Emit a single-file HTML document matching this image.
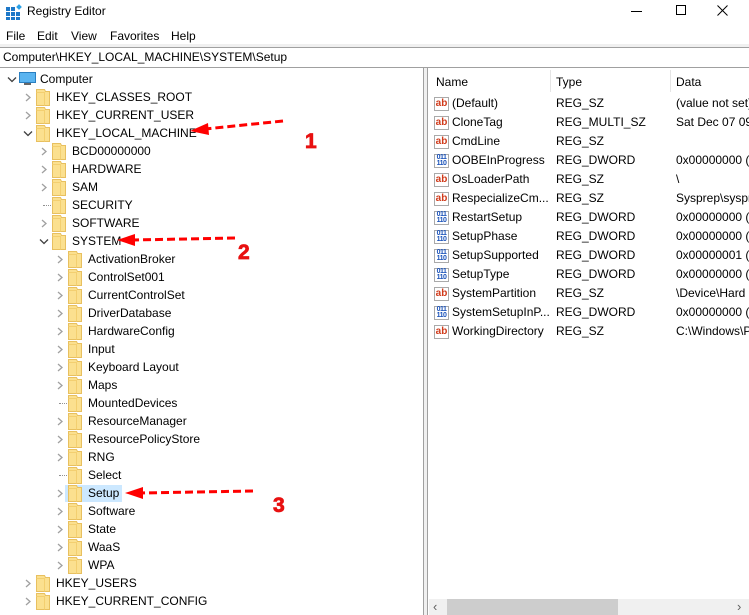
<!DOCTYPE html>
<html><head><meta charset="utf-8"><style>
*{margin:0;padding:0;box-sizing:border-box}
body{width:749px;height:615px;background:#fff;font-family:"Liberation Sans",sans-serif;font-size:12px;color:#000;position:relative;overflow:hidden}
.a{position:absolute;white-space:nowrap}
.t{position:absolute;height:18px;line-height:18px;white-space:nowrap}
.r{position:absolute;height:19px;line-height:19px;white-space:nowrap}
</style></head><body>
<svg class="a" style="left:6px;top:4px" width="16" height="16"><rect x="0" y="3" width="4" height="4" fill="#1e78c8"/><rect x="5" y="3" width="4" height="4" fill="#1e78c8"/><rect x="0" y="8" width="4" height="4" fill="#1e78c8"/><rect x="5" y="8" width="4" height="4" fill="#1e78c8"/><rect x="10" y="8" width="4" height="4" fill="#1e78c8"/><rect x="0" y="13" width="4" height="3" fill="#1e78c8"/><rect x="5" y="13" width="4" height="3" fill="#1e78c8"/><rect x="10" y="13" width="4" height="3" fill="#1e78c8"/><rect x="11" y="1" width="4" height="4" fill="#2aa0e6" transform="rotate(45 13 3)"/></svg>
<div class="a" style="left:27px;top:4px;font-size:12px">Registry Editor</div>
<div class="a" style="left:631px;top:11px;width:11px;height:1px;background:#000"></div>
<div class="a" style="left:676px;top:5px;width:10px;height:10px;border:1px solid #000"></div>
<svg class="a" style="left:717px;top:5px" width="11" height="11"><path d="M0.5 0.5l10 10M10.5 0.5l-10 10" stroke="#000" stroke-width="1"/></svg>
<div class="a" style="left:6px;top:29px">File</div>
<div class="a" style="left:37px;top:29px">Edit</div>
<div class="a" style="left:71px;top:29px">View</div>
<div class="a" style="left:110px;top:29px">Favorites</div>
<div class="a" style="left:171px;top:29px">Help</div>
<div class="a" style="left:0;top:44px;width:749px;height:3px;background:#f0f0f0"></div>
<div class="a" style="left:0;top:47px;width:749px;height:1px;background:#a0a0a0"></div>
<div class="a" style="left:3px;top:50px">Computer\HKEY_LOCAL_MACHINE\SYSTEM\Setup</div>
<div class="a" style="left:0;top:67px;width:749px;height:1px;background:#a0a0a0"></div>
<div class="a" style="left:423px;top:68px;width:5px;height:547px;background:#f0f0f0;border-left:1px solid #a0a0a0;border-right:1px solid #a0a0a0"></div>
<div id="tree"></div>
<div class="a" style="left:436px;top:75px">Name</div>
<div class="a" style="left:550px;top:70px;width:1px;height:22px;background:#e5e5e5"></div>
<div class="a" style="left:556px;top:75px">Type</div>
<div class="a" style="left:670px;top:70px;width:1px;height:22px;background:#e5e5e5"></div>
<div class="a" style="left:676px;top:75px">Data</div>
<div id="list"></div>
<div class="a" style="left:429px;top:599px;width:320px;height:16px;background:#f0f0f0"></div>
<div class="a" style="left:447px;top:599px;width:171px;height:16px;background:#cdcdcd"></div>
<div class="a" style="left:433px;top:599px;color:#606060;font-size:13px;line-height:16px">‹</div>
<div class="a" style="left:737px;top:599px;color:#606060;font-size:13px;line-height:16px">›</div>
<svg class="a" style="left:0;top:0" width="749" height="615">
<g stroke="#f00" stroke-width="3" stroke-dasharray="8 4" fill="none">
<line x1="283" y1="121" x2="205" y2="129"/>
<line x1="235" y1="238" x2="133" y2="240"/>
<line x1="253" y1="491" x2="140" y2="493"/>
</g>
<g fill="#f00">
<polygon points="190,131 208,123 209,135"/>
<polygon points="117,240 135,234 135,246"/>
<polygon points="125,493 143,487 143,499"/>
</g>
<g fill="#e81010" font-family="Liberation Sans" font-weight="700" font-size="21" stroke="#e81010" stroke-width="0.8">
<text x="305" y="148">1</text>
<text x="238" y="259">2</text>
<text x="273" y="512">3</text>
</g>
</svg>
<script>
var tree=[[0,'Computer','v'],[1,'HKEY_CLASSES_ROOT','>'],[1,'HKEY_CURRENT_USER','>'],[1,'HKEY_LOCAL_MACHINE','v'],[2,'BCD00000000','>'],[2,'HARDWARE','>'],[2,'SAM','>'],[2,'SECURITY','.'],[2,'SOFTWARE','>'],[2,'SYSTEM','v'],
[3,'ActivationBroker','>'],[3,'ControlSet001','>'],[3,'CurrentControlSet','>'],[3,'DriverDatabase','>'],[3,'HardwareConfig','>'],[3,'Input','>'],[3,'Keyboard Layout','>'],[3,'Maps','>'],[3,'MountedDevices','.'],[3,'ResourceManager','>'],[3,'ResourcePolicyStore','>'],[3,'RNG','>'],[3,'Select','.'],[3,'Setup','>'],[3,'Software','>'],[3,'State','>'],[3,'WaaS','>'],[3,'WPA','>'],[1,'HKEY_USERS','>'],[1,'HKEY_CURRENT_CONFIG','>']];
var h='';
tree.forEach(function(e,i){var l=e[0],y=70+i*18;
 var ex=12+16*l, fx=(l==0?19:36+16*(l-1));
 if(e[1]=='Setup')h+='<div class="a" style="left:65px;top:'+(y+1)+'px;width:57px;height:17px;background:#cce8ff"></div>';
 if(e[2]=='>')h+='<svg class="a" style="left:'+(ex-4)+'px;top:'+(y+5)+'px" width="8" height="9"><path d="M2 1l4 3.5L2 8" stroke="#a0a0a0" stroke-width="1.3" fill="none"/></svg>';
 if(e[2]=='v')h+='<svg class="a" style="left:'+(ex-5)+'px;top:'+(y+6)+'px" width="10" height="7"><path d="M1 1.5l4 4 4-4" stroke="#404040" stroke-width="1.3" fill="none"/></svg>';
 if(e[2]=='.')h+='<div class="a" style="left:'+(ex-1)+'px;top:'+(y+9)+'px;width:8px;border-top:1px dotted #909090"></div>';
 if(l==0)h+='<svg class="a" style="left:19px;top:'+(y+2)+'px" width="17" height="14"><rect x="0.5" y="0.5" width="16" height="10" fill="#5ab4f0" stroke="#2a7fc0"/><rect x="5" y="11" width="7" height="2" fill="#666"/></svg>';
 else h+='<svg class="a" style="left:'+fx+'px;top:'+(y+1)+'px" width="14" height="17"><path d="M0.5 0.5h8l1 2h4v14h-13z" fill="#fbe08f" stroke="#e8c060"/><path d="M0.5 3.5h8v13" fill="none" stroke="#f3cf70"/></svg>';
 h+='<div class="t" style="left:'+(l==0?40:56+16*(l-1))+'px;top:'+y+'px">'+e[1]+'</div>';
});
document.getElementById('tree').innerHTML=h;
var L=[['s','(Default)','REG_SZ','(value not set)'],['s','CloneTag','REG_MULTI_SZ','Sat Dec 07 09:'],['s','CmdLine','REG_SZ',''],['d','OOBEInProgress','REG_DWORD','0x00000000 (0)'],['s','OsLoaderPath','REG_SZ','\\'],['s','RespecializeCm...','REG_SZ','Sysprep\\sysprep'],['d','RestartSetup','REG_DWORD','0x00000000 (0)'],['d','SetupPhase','REG_DWORD','0x00000000 (0)'],['d','SetupSupported','REG_DWORD','0x00000001 (1)'],['d','SetupType','REG_DWORD','0x00000000 (0)'],['s','SystemPartition','REG_SZ','\\Device\\Hard'],['d','SystemSetupInP...','REG_DWORD','0x00000000 (0)'],['s','WorkingDirectory','REG_SZ','C:\\Windows\\P']];
var g='';
L.forEach(function(e,i){var y=94+i*19;
 if(e[0]=='s')g+='<div class="a" style="left:434px;top:'+(y+3)+'px;width:15px;height:14px;border:1px solid #aaa;background:#fff;color:#d03a1a;font-size:10px;font-weight:bold;line-height:11px;text-align:center">ab</div>';
 else g+='<div class="a" style="left:434px;top:'+(y+3)+'px;width:15px;height:14px;border:1px solid #aaa;background:#fff;color:#1850b8;font-size:7px;font-weight:bold;line-height:6px;text-align:center;letter-spacing:-0.5px">011<br>110</div>';
 g+='<div class="r" style="left:452px;top:'+y+'px">'+e[1]+'</div><div class="r" style="left:556px;top:'+y+'px">'+e[2]+'</div><div class="r" style="left:676px;top:'+y+'px">'+e[3]+'</div>';
});
document.getElementById('list').innerHTML=g;
</script>
</body></html>
